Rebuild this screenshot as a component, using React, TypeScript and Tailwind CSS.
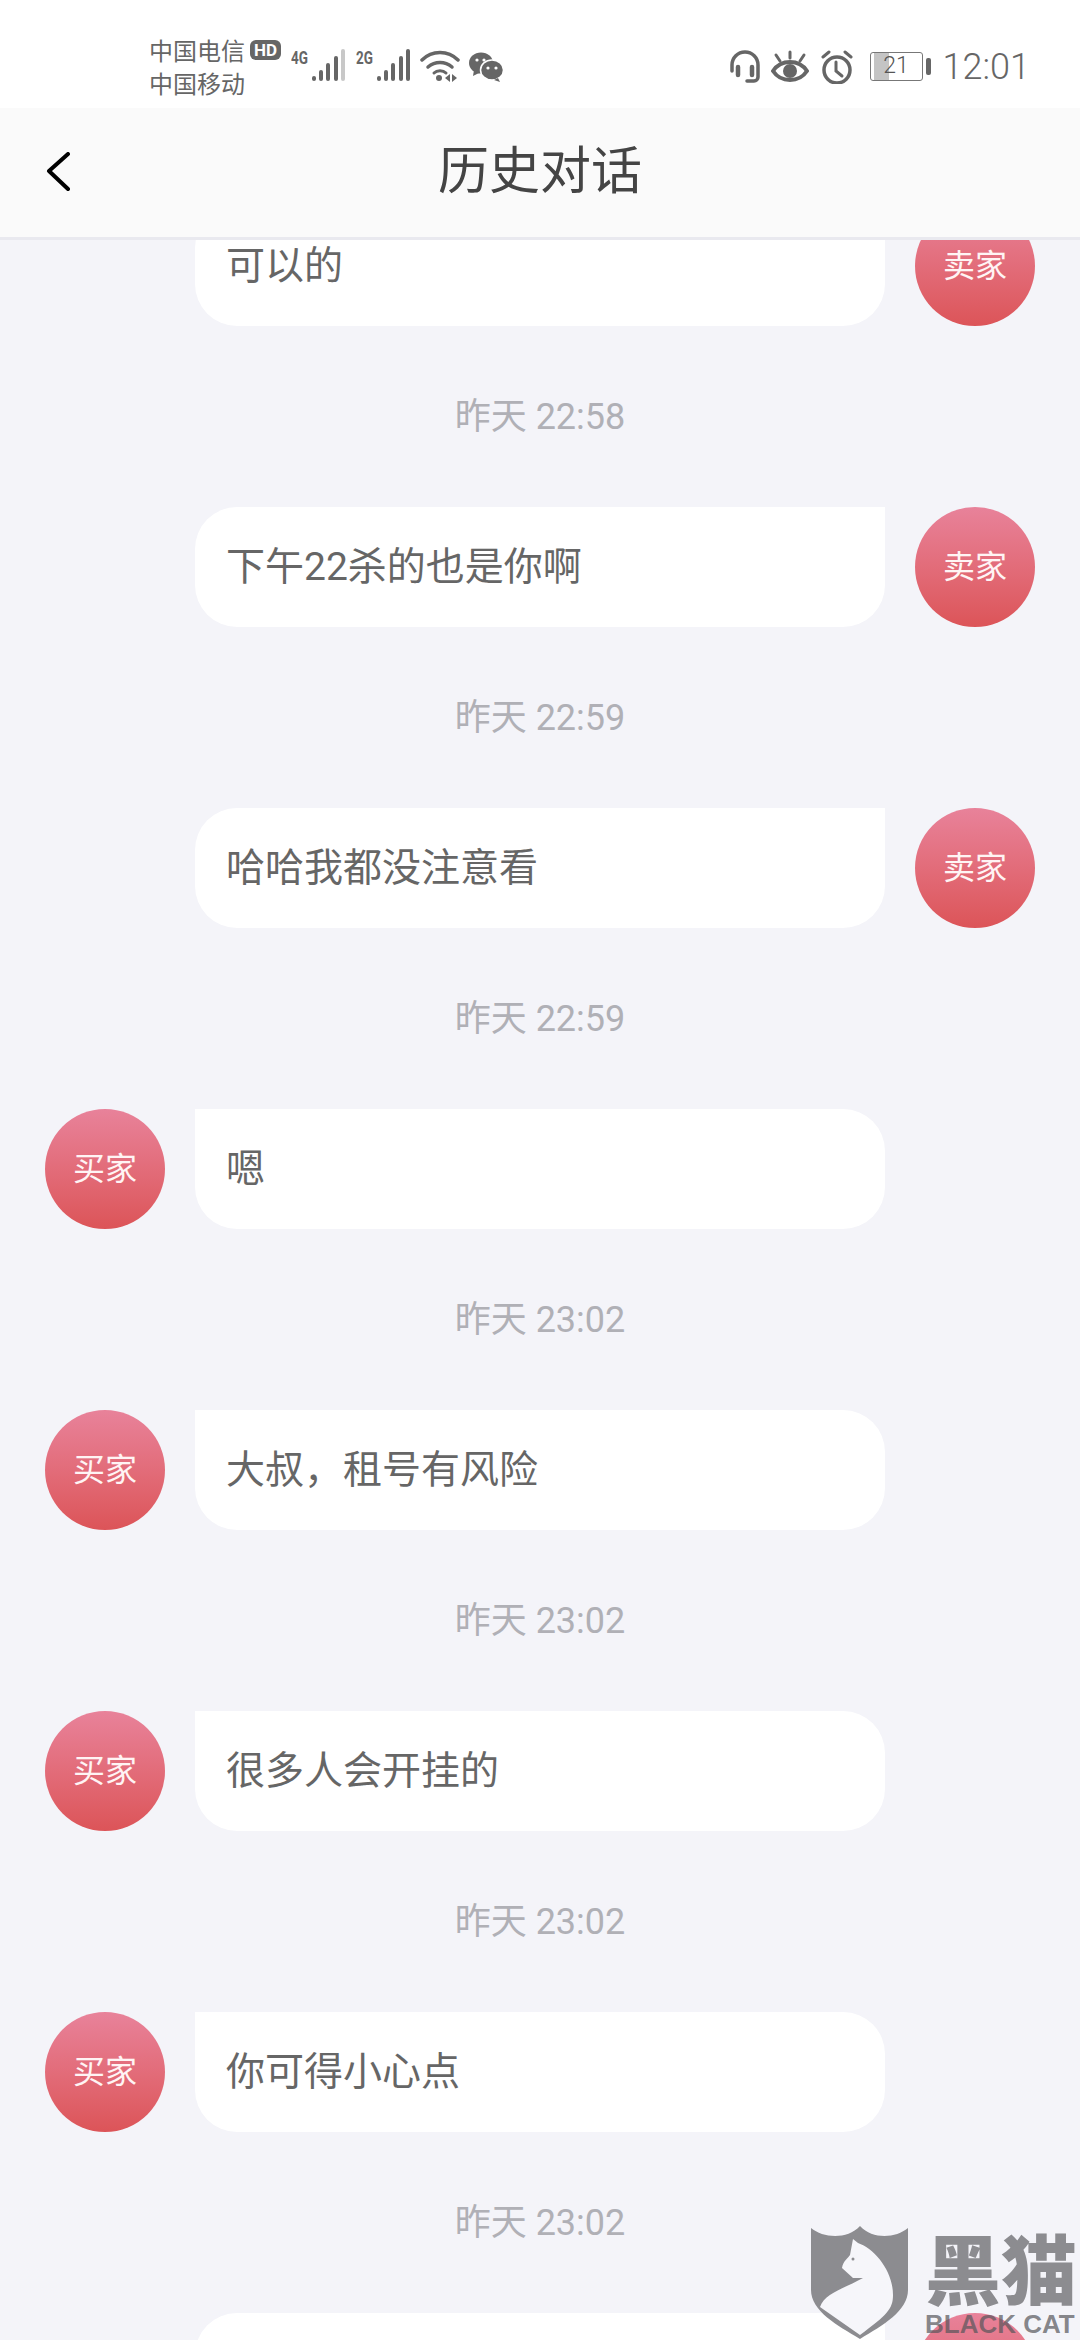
const font = "font-['Roboto','Noto_Sans_CJK_SC',sans-serif]";

type Msg = { time?: string; text: string; who: '卖家' | '买家' };

const messages: Msg[] = [
  { text: '可以的', who: '卖家' },
  { time: '昨天 22:58', text: '下午22杀的也是你啊', who: '卖家' },
  { time: '昨天 22:59', text: '哈哈我都没注意看', who: '卖家' },
  { time: '昨天 22:59', text: '嗯', who: '买家' },
  { time: '昨天 23:02', text: '大叔，租号有风险', who: '买家' },
  { time: '昨天 23:02', text: '很多人会开挂的', who: '买家' },
  { time: '昨天 23:02', text: '你可得小心点', who: '买家' },
  { time: '昨天 23:02', text: '', who: '卖家' },
];

function Signal({ label, lastGrey }: { label: string; lastGrey?: boolean }) {
  return (
    <div className="h-[34px] w-[56px] relative">
      <span className="absolute left-0 top-[1px] text-[18px] leading-[18px] font-bold text-[#666] font-['Roboto',sans-serif] scale-x-75 origin-left">{label}</span>
      <svg width="56" height="34" viewBox="0 0 56 34" className="absolute left-0 top-0">
        <g stroke="#666" strokeWidth="4" strokeLinecap="round">
          <path d="M23 31v-1" />
          <path d="M30 31v-7" />
          <path d="M37 31v-14" />
          <path d="M45 31V10" />
          <path d="M52 31V3" stroke={lastGrey ? '#c8c8c8' : '#666'} />
        </g>
      </svg>
    </div>
  );
}

function StatusBar() {
  return (
    <div className={`h-[108px] bg-white flex items-start justify-between pl-[149px] pr-[50px] text-[#666] ${font}`}>
      <div className="flex items-start pt-[36px]">
        <div className="w-[96px] text-[24px] leading-[33px]">
          <div>中国电信</div>
          <div>中国移动</div>
        </div>
        <div className="ml-[5px] mt-[4px] w-[31px] h-[20px] rounded-[6px] bg-[#666] text-white text-[17px] leading-[20px] font-bold text-center">HD</div>
        <div className="ml-[10px] mt-[12px]"><Signal label="4G" lastGrey /></div>
        <div className="ml-[9px] mt-[12px]"><Signal label="2G" /></div>
        <svg width="40" height="34" viewBox="0 0 40 34" className="ml-[8px] mt-[13px]" fill="none">
          <path d="M2 11C12 1 28 1 38 11" stroke="#666" strokeWidth="3.5" strokeLinecap="round" />
          <path d="M8 18c7-6 17-6 24 0" stroke="#666" strokeWidth="3.5" strokeLinecap="round" />
          <path d="M14 24c3-3 9-3 12 0" stroke="#666" strokeWidth="3" strokeLinecap="round" />
          <circle cx="19" cy="29" r="3" fill="#666" />
          <path d="M30 25v8l-5-4zM32 25v8l5-4z" fill="#666" />
        </svg>
        <svg width="36" height="32" viewBox="0 0 36 32" className="ml-[8px] mt-[15px]">
          <ellipse cx="13" cy="12" rx="12" ry="10.5" fill="#666" />
          <path d="M6 19l-1 6 6-3z" fill="#666" />
          <ellipse cx="24" cy="19" rx="11.5" ry="10" fill="#666" stroke="#fff" strokeWidth="1.5" />
          <path d="M30 27l2 4-6-2z" fill="#666" />
          <circle cx="9" cy="9" r="1.6" fill="#fff" />
          <circle cx="16" cy="9" r="1.6" fill="#fff" />
          <circle cx="20" cy="17" r="1.6" fill="#fff" />
          <circle cx="28" cy="17" r="1.6" fill="#fff" />
        </svg>
      </div>
      <div className="flex items-center pt-[49px] h-[84px]">
        <svg width="32" height="34" viewBox="0 0 32 34" fill="none">
          <path d="M3 21v-6a13 13 0 0 1 26 0v12a4 4 0 0 1-4 4h-7" stroke="#666" strokeWidth="3.5" strokeLinecap="round" />
          <path d="M9 17v8M23 17v8" stroke="#666" strokeWidth="4.5" strokeLinecap="round" />
        </svg>
        <svg width="38" height="34" viewBox="0 0 38 34" fill="none" className="ml-[10px]">
          <path d="M2 21c8-12 26-12 34 0-8 12-26 12-34 0z" stroke="#666" strokeWidth="4" />
          <circle cx="19" cy="21" r="7" fill="#666" />
          <path d="M19 2v6M5 5l4 6M33 5l-4 6" stroke="#666" strokeWidth="3" strokeLinecap="round" />
        </svg>
        <svg width="34" height="34" viewBox="0 0 34 34" fill="none" className="ml-[11px]">
          <circle cx="17" cy="20" r="13" stroke="#666" strokeWidth="3.5" />
          <path d="M16 12v9l6 5" stroke="#666" strokeWidth="3" strokeLinecap="round" />
          <path d="M3 7l6-5M31 7l-6-5" stroke="#666" strokeWidth="3" strokeLinecap="round" />
        </svg>
        <div className="ml-[16px] relative w-[53px] h-[29px] rounded-[3px] border-[1.5px] border-[#777] overflow-hidden">
          <div className="h-full w-[15px] bg-[#c4c4c4] ml-[3px]" />
          <span className="absolute inset-0 text-center text-[23px] leading-[26px] text-[#555] font-['Roboto',sans-serif] font-light">21</span>
        </div>
        <div className="ml-[3px] w-[5px] h-[17px] rounded-[2px] bg-[#666]" />
        <span className="ml-[12px] text-[36px] leading-[40px] text-[#666] font-['Roboto',sans-serif] font-light">12:01</span>
      </div>
    </div>
  );
}

function Avatar({ who }: { who?: string }) {
  return (
    <div className="w-[120px] h-[120px] shrink-0 rounded-full bg-gradient-to-b from-[#e8829a] to-[#dc5458] flex items-center justify-center text-[#fff4f4] text-[32px]">
      {who}
    </div>
  );
}

function Row({ msg }: { msg: Msg }) {
  const seller = msg.who === '卖家';
  const bubble = (
    <div
      className={`w-[690px] h-[120px] bg-white flex items-center px-[31px] text-[39px] text-[#666] rounded-[42px] ${
        seller ? 'rounded-tr-none' : 'rounded-tl-none'
      }`}
    >
      {msg.text}
    </div>
  );
  return (
    <div>
      {msg.time && <div className="h-[181px] flex items-center justify-center text-[36px] text-[#b0b0b6]">{msg.time}</div>}
      {seller ? (
        <div className="flex justify-end gap-[30px] pr-[45px]">
          {bubble}
          <Avatar who={msg.text ? msg.who : undefined} />
        </div>
      ) : (
        <div className="flex gap-[30px] pl-[45px]">
          <Avatar who={msg.who} />
          {bubble}
        </div>
      )}
    </div>
  );
}

function Watermark() {
  return (
    <div className="absolute right-0 bottom-0 w-[270px] h-[115px] flex pl-[1px] pointer-events-none">
      <svg width="97" height="114" viewBox="0 0 97 114" className="shrink-0">
        <path d="M0 3C12 13 36 15 49 1 62 15 85 13 97 3V65C97 86 72 100 49 114 26 100 0 86 0 65Z" fill="#8c8c90" />
        <path d="M42 14L47 18C64 24 82 46 82 70 82 84 76 90 49 110L9 82C14 68 32 64 52 53L42 53 31 43C32 36 38 32 39 30Z" fill="#f6f6fa" />
        <circle cx="42" cy="34" r="1.5" fill="#8c8c90" />
      </svg>
      <div className="ml-[17px] flex flex-col items-start font-['Noto_Sans_CJK_SC',sans-serif]">
        <div className="text-[76px] leading-[76px] h-[76px] font-black mt-[3px] text-[#8c8c90] whitespace-nowrap">黑猫</div>
        <div className="text-[26px] leading-[28px] mt-[6px] font-black font-['Liberation_Sans',sans-serif] text-[#55555a]/70 whitespace-nowrap">BLACK CAT</div>
      </div>
    </div>
  );
}

export default function App() {
  return (
    <div className={`relative w-[1080px] h-[2340px] overflow-hidden bg-[#f4f4f9] ${font}`}>
      <StatusBar />
      <header className="relative z-10 h-[132px] bg-[#fafafa] border-b-[3px] border-[#e9e9ef] flex items-center justify-center">
        <svg width="26" height="40" viewBox="0 0 26 40" fill="none" className="absolute left-[46px] top-[44px]">
          <path d="M22 2L3 19l19 18" stroke="#000" strokeWidth="4" strokeLinecap="round" strokeLinejoin="round" />
        </svg>
        <h1 className="text-[51px] font-normal text-[#444]">历史对话</h1>
      </header>
      <main className="-mt-[34px]">
        {messages.map((m, i) => (
          <Row key={i} msg={m} />
        ))}
      </main>
      <Watermark />
    </div>
  );
}
